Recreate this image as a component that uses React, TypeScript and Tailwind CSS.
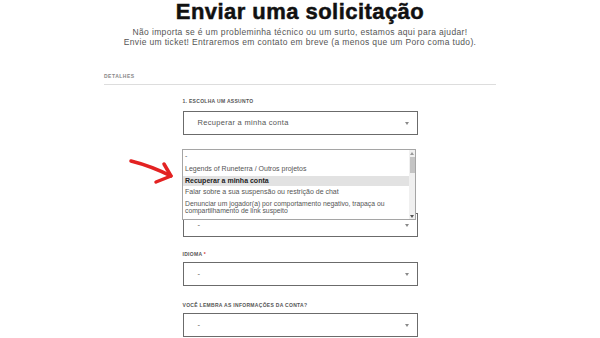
import React from "react";

function Caret() {
  return (
    <svg width="4" height="3" viewBox="0 0 4 3" className="shrink-0">
      <path d="M0 0 L4 0 L2 3 Z" fill="#8a8a8a" />
    </svg>
  );
}

function SelectBox({ value }: { value: string }) {
  return (
    <div className="flex h-[24px] items-center justify-between border border-[#6b6b6b] bg-white pl-[14px] pr-[8px]">
      <span className="text-[7.5px] leading-[10px] tracking-[0.3px] text-[#555]">{value}</span>
      <Caret />
    </div>
  );
}

function FieldLabel({ children }: { children: React.ReactNode }) {
  return (
    <div className="text-[5px] font-bold leading-[8px] tracking-[0.3px] text-[#555]">{children}</div>
  );
}

export default function App() {
  return (
    <div className="relative h-[338px] w-[600px] overflow-hidden bg-white font-['Liberation_Sans',Arial,sans-serif]">
      <h1 className="text-center text-[22px] font-bold leading-[24px] tracking-[0.45px] text-[#111] [-webkit-text-stroke:0.5px_#111]">
        Enviar uma solicitação
      </h1>
      <p className="mt-[3px] text-center text-[8.5px] leading-[10px] tracking-[0.35px] text-[#555]">
        Não importa se é um probleminha técnico ou um surto, estamos aqui para ajudar!
        <br />
        Envie um ticket! Entraremos em contato em breve (a menos que um Poro coma tudo).
      </p>

      <div className="mx-auto mt-[25px] w-[392px]">
        <div className="text-[5px] font-bold leading-[8px] tracking-[0.5px] text-[#888]">DETALHES</div>
        <div className="mt-[4px] border-t border-[#dddddd]" />
      </div>

      <div className="mx-auto w-[235px]">
        <div className="mt-[12px]">
          <FieldLabel>1. ESCOLHA UM ASSUNTO</FieldLabel>
        </div>
        <div className="mt-[6px]">
          <SelectBox value="Recuperar a minha conta" />
        </div>

        <div className="mt-[78px]">
          <SelectBox value="-" />
        </div>

        <div className="mt-[13px]">
          <FieldLabel>
            IDIOMA <span className="text-[#d13639]">*</span>
          </FieldLabel>
        </div>
        <div className="mt-[4px]">
          <SelectBox value="-" />
        </div>

        <div className="mt-[15px]">
          <FieldLabel>VOCÊ LEMBRA AS INFORMAÇÕES DA CONTA?</FieldLabel>
        </div>
        <div className="mt-[4px]">
          <SelectBox value="-" />
        </div>
      </div>

      {/* open dropdown list */}
      <div className="absolute left-[182px] top-[149px] flex h-[71px] w-[234px] border border-[#a5a5a5] bg-white">
        <div className="flex flex-1 flex-col text-[7px] text-[#555]">
          <div className="flex h-[13px] items-center pl-[2px]">-</div>
          <div className="flex h-[13px] items-center pl-[2px]">Legends of Runeterra / Outros projetos</div>
          <div className="flex h-[10px] items-center bg-[#e2e2e2] pl-[2px] font-bold text-[#222]">
            Recuperar a minha conta
          </div>
          <div className="flex h-[13px] items-center pl-[2px]">
            Falar sobre a sua suspensão ou restrição de chat
          </div>
          <div className="pl-[2px] pt-[1px] text-[6.8px] leading-[7px]">
            Denunciar um jogador(a) por comportamento negativo, trapaça ou
            <br />
            compartilhamento de link suspeito
          </div>
        </div>
        <div className="flex w-[6px] flex-col items-center bg-[#f0f0f0]">
          <svg width="4" height="3" viewBox="0 0 4 3" className="mt-[2px]">
            <path d="M0 3 L4 3 L2 0 Z" fill="#9a9a9a" />
          </svg>
          <div className="mt-[2px] h-[16px] w-[5px] bg-[#c4c4c4]" />
          <div className="flex-1" />
          <svg width="4" height="3" viewBox="0 0 4 3" className="mb-[1px]">
            <path d="M0 0 L4 0 L2 3 Z" fill="#555" />
          </svg>
        </div>
      </div>

      {/* red pointer arrow */}
      <svg className="absolute left-[125px] top-[155px]" width="55" height="32" viewBox="125 155 55 32">
        <path d="M131 161 Q151 166 171 176" fill="none" stroke="#e32222" strokeWidth="3.5" strokeLinecap="round" />
        <path d="M164 164 L171 176 L156 182" fill="none" stroke="#e32222" strokeWidth="3.5" strokeLinecap="round" strokeLinejoin="round" />
      </svg>
    </div>
  );
}
